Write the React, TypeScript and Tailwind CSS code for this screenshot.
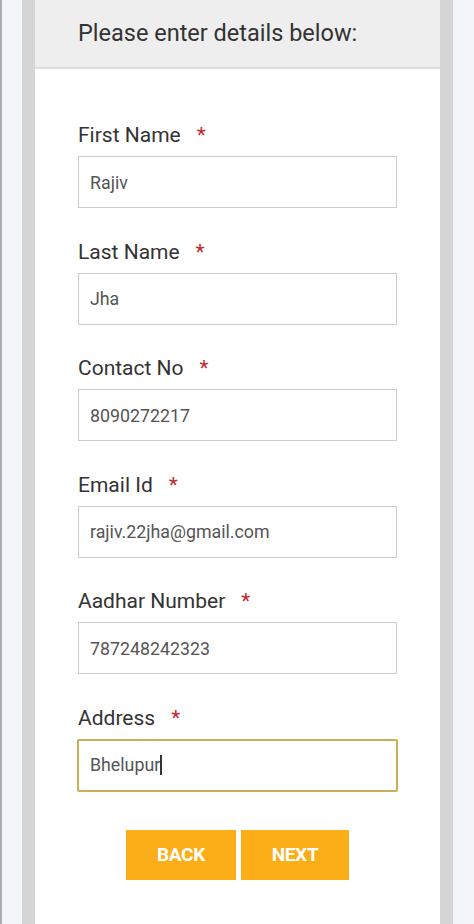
import React from "react";

const fields = [
  { label: "First Name", value: "Rajiv" },
  { label: "Last Name", value: "Jha" },
  { label: "Contact No", value: "8090272217" },
  { label: "Email Id", value: "rajiv.22jha@gmail.com" },
  { label: "Aadhar Number", value: "787248242323" },
];

function Label({ text }: { text: string }) {
  return (
    <div className="flex items-center h-[28px] leading-[28px] text-[21px] text-[#333333]">
      <span>{text}</span>
      <span className="ml-[16px] text-[#c0282d]">*</span>
    </div>
  );
}

export default function App() {
  return (
    <div
      className="w-[474px] h-[924px] flex bg-[#f2f6fa] overflow-hidden"
      style={{ fontFamily: "Roboto, 'Noto Sans', Arial, sans-serif" }}
    >
      <div className="w-[2px] bg-[#a6adb4]" />
      <div className="w-[20px]" />
      <div className="w-[13px] bg-[#d5d5d5]" />
      <div className="w-[405px] bg-white flex flex-col">
        <div className="h-[69px] bg-[#eeeeee] border-b-[2px] border-[#dddddd] flex items-center pl-[43px] text-[23.5px] text-[#333333]">
          Please enter details below:
        </div>
        <div className="px-[43px] pt-[52px] flex flex-col gap-[29.6px]">
          {fields.map((f) => (
            <div key={f.label} className="flex flex-col gap-[7px]">
              <Label text={f.label} />
              <input
                readOnly
                value={f.value}
                className="h-[52px] w-full border border-[#cccccc] bg-white px-[11px] text-[17.8px] text-[#555555] outline-none"
                style={{ fontFamily: "Roboto, 'Noto Sans', Arial, sans-serif" }}
              />
            </div>
          ))}
          <div className="flex flex-col gap-[7px]">
            <Label text="Address" />
            <div className="h-[53px] w-[321px] -ml-[1px] border-[2px] border-[#cbae55] rounded-[2px] bg-white px-[11px] flex items-center text-[17.8px] text-[#555555]">
              <span>Bhelupur</span>
              <span className="w-[1.5px] h-[20px] bg-[#333333]" />
            </div>
          </div>
        </div>
        <div className="flex justify-center gap-[5px] mt-[38px]">
          <button className="w-[110px] h-[50px] bg-[#fbae17] text-white font-bold text-[19px] tracking-[-0.3px]">
            BACK
          </button>
          <button className="w-[108px] h-[50px] bg-[#fbae17] text-white font-bold text-[19px] tracking-[-0.3px]">
            NEXT
          </button>
        </div>
      </div>
      <div className="w-[13px] bg-[#d5d5d5]" />
      <div className="flex-1" />
    </div>
  );
}
